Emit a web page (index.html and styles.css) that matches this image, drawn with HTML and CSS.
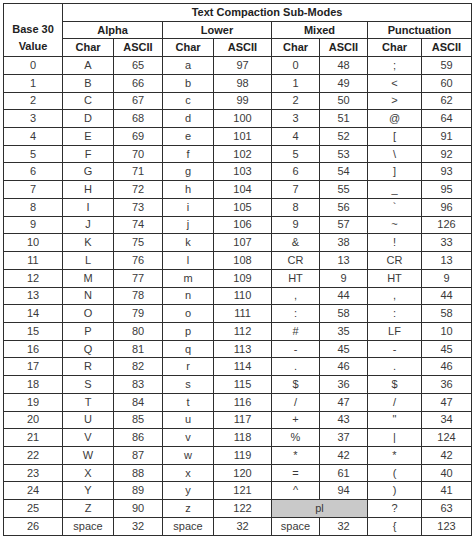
FILE: index.html
```html
<!DOCTYPE html>
<html>
<head>
<meta charset="utf-8">
<link rel="stylesheet" href="styles.css">
</head>
<body>
<table class="codes">
<colgroup>
<col class="c-base"><col class="c-ac"><col class="c-aa"><col class="c-lc"><col class="c-la"><col class="c-mc"><col class="c-ma"><col class="c-pc"><col class="c-pa">
</colgroup>
<thead>
<tr><th class="base" rowspan="3">Base 30<br>Value</th><th colspan="8">Text Compaction Sub-Modes</th></tr>
<tr><th colspan="2">Alpha</th><th colspan="2">Lower</th><th colspan="2">Mixed</th><th colspan="2">Punctuation</th></tr>
<tr><th>Char</th><th>ASCII</th><th>Char</th><th>ASCII</th><th>Char</th><th>ASCII</th><th>Char</th><th>ASCII</th></tr>
</thead>
<tbody>
<tr><td>0</td><td>A</td><td>65</td><td>a</td><td>97</td><td>0</td><td>48</td><td>;</td><td>59</td></tr>
<tr><td>1</td><td>B</td><td>66</td><td>b</td><td>98</td><td>1</td><td>49</td><td>&lt;</td><td>60</td></tr>
<tr><td>2</td><td>C</td><td>67</td><td>c</td><td>99</td><td>2</td><td>50</td><td>&gt;</td><td>62</td></tr>
<tr><td>3</td><td>D</td><td>68</td><td>d</td><td>100</td><td>3</td><td>51</td><td>@</td><td>64</td></tr>
<tr><td>4</td><td>E</td><td>69</td><td>e</td><td>101</td><td>4</td><td>52</td><td>[</td><td>91</td></tr>
<tr><td>5</td><td>F</td><td>70</td><td>f</td><td>102</td><td>5</td><td>53</td><td>\</td><td>92</td></tr>
<tr><td>6</td><td>G</td><td>71</td><td>g</td><td>103</td><td>6</td><td>54</td><td>]</td><td>93</td></tr>
<tr><td>7</td><td>H</td><td>72</td><td>h</td><td>104</td><td>7</td><td>55</td><td>_</td><td>95</td></tr>
<tr><td>8</td><td>I</td><td>73</td><td>i</td><td>105</td><td>8</td><td>56</td><td>`</td><td>96</td></tr>
<tr><td>9</td><td>J</td><td>74</td><td>j</td><td>106</td><td>9</td><td>57</td><td>~</td><td>126</td></tr>
<tr><td>10</td><td>K</td><td>75</td><td>k</td><td>107</td><td>&amp;</td><td>38</td><td>!</td><td>33</td></tr>
<tr><td>11</td><td>L</td><td>76</td><td>l</td><td>108</td><td>CR</td><td>13</td><td>CR</td><td>13</td></tr>
<tr><td>12</td><td>M</td><td>77</td><td>m</td><td>109</td><td>HT</td><td>9</td><td>HT</td><td>9</td></tr>
<tr><td>13</td><td>N</td><td>78</td><td>n</td><td>110</td><td>,</td><td>44</td><td>,</td><td>44</td></tr>
<tr><td>14</td><td>O</td><td>79</td><td>o</td><td>111</td><td>:</td><td>58</td><td>:</td><td>58</td></tr>
<tr><td>15</td><td>P</td><td>80</td><td>p</td><td>112</td><td>#</td><td>35</td><td>LF</td><td>10</td></tr>
<tr><td>16</td><td>Q</td><td>81</td><td>q</td><td>113</td><td>-</td><td>45</td><td>-</td><td>45</td></tr>
<tr><td>17</td><td>R</td><td>82</td><td>r</td><td>114</td><td>.</td><td>46</td><td>.</td><td>46</td></tr>
<tr><td>18</td><td>S</td><td>83</td><td>s</td><td>115</td><td>$</td><td>36</td><td>$</td><td>36</td></tr>
<tr><td>19</td><td>T</td><td>84</td><td>t</td><td>116</td><td>/</td><td>47</td><td>/</td><td>47</td></tr>
<tr><td>20</td><td>U</td><td>85</td><td>u</td><td>117</td><td>+</td><td>43</td><td>"</td><td>34</td></tr>
<tr><td>21</td><td>V</td><td>86</td><td>v</td><td>118</td><td>%</td><td>37</td><td>|</td><td>124</td></tr>
<tr><td>22</td><td>W</td><td>87</td><td>w</td><td>119</td><td>*</td><td>42</td><td>*</td><td>42</td></tr>
<tr><td>23</td><td>X</td><td>88</td><td>x</td><td>120</td><td>=</td><td>61</td><td>(</td><td>40</td></tr>
<tr><td>24</td><td>Y</td><td>89</td><td>y</td><td>121</td><td>^</td><td>94</td><td>)</td><td>41</td></tr>
<tr><td>25</td><td>Z</td><td>90</td><td>z</td><td>122</td><td class="pl" colspan="2">pl</td><td>?</td><td>63</td></tr>
<tr><td>26</td><td>space</td><td>32</td><td>space</td><td>32</td><td>space</td><td>32</td><td>{</td><td>123</td></tr>
</tbody>
</table>
</body>
</html>
```
FILE: styles.css
```css
html, body {
  margin: 0;
  padding: 0;
  background: #ffffff;
}
body {
  padding: 3px 0 0 3px;
}
.codes {
  border-collapse: collapse;
  table-layout: fixed;
  width: 468px;
  font-family: "Liberation Sans", Arial, sans-serif;
  font-size: 11px;
  color: #3a3a3a;
}
.c-base { width: 59px; }
.c-ac { width: 51px; }
.c-aa { width: 49px; }
.c-lc { width: 51px; }
.c-la { width: 58px; }
.c-mc { width: 48px; }
.c-ma { width: 48px; }
.c-pc { width: 54px; }
.c-pa { width: 50px; }
.codes th,
.codes td {
  border: 1px solid #2e2e2e;
  height: 16.73px;
  padding: 0;
  text-align: center;
  vertical-align: middle;
  line-height: 13px;
  white-space: nowrap;
}
.codes th {
  font-weight: bold;
  color: #222222;
}
.codes th.base {
  vertical-align: bottom;
  line-height: 17.7px;
}
.codes td.pl {
  background: #c9c9c9;
}
```
